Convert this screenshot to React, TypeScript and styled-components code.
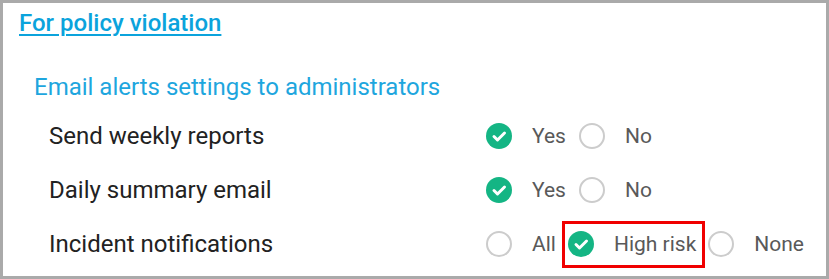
import React from 'react';
import styled, { createGlobalStyle } from 'styled-components';

const GlobalStyle = createGlobalStyle`
  html, body {
    margin: 0;
    padding: 0;
    background: #ffffff;
  }
  body {
    font-family: Roboto, 'Liberation Sans', Arial, sans-serif;
  }
`;

/**
 * Panel frame with grey border
 */
const Panel = styled.div`
  width: 829px;
  height: 279px;
  box-sizing: border-box;
  border: 3px solid #aaaaaa;
  padding: 6px 0 0 16px;
  background: #ffffff;
`;

const SectionTitle = styled.a`
  display: inline-block;
  color: #0ba3dc;
  font-size: 24px;
  font-weight: 500;
  line-height: 28px;
  text-decoration: underline;
  text-decoration-thickness: 2px;
  text-underline-offset: 3px;
  cursor: pointer;
`;

const Group = styled.div`
  margin-top: 36px;
  padding-left: 15px;
`;

const GroupTitle = styled.h2`
  margin: 0 0 8px 0;
  color: #1ea6de;
  font-size: 24px;
  font-weight: 400;
  line-height: 28px;
`;

const SettingRow = styled.div`
  display: grid;
  grid-template-columns: 437px auto;
  align-items: center;
  height: 54px;
  padding-left: 15px;
`;

const SettingLabel = styled.span`
  color: #222222;
  font-size: 24px;
  line-height: 28px;
`;

const RadioGroup = styled.div`
  display: flex;
  align-items: center;
`;

const Option = styled.label<{ $highlight?: boolean }>`
  display: flex;
  align-items: center;
  gap: 20px;
  box-sizing: border-box;
  height: ${p => (p.$highlight ? '47px' : 'auto')};
  margin-right: ${p => (p.$highlight ? '3px' : '13px')};
  margin-left: ${p => (p.$highlight ? '-7px' : '0')};
  padding: ${p => (p.$highlight ? '0 6px 0 3px' : '0')};
  border: ${p => (p.$highlight ? '3px solid #f00000' : 'none')};
  cursor: pointer;
`;

const OptionText = styled.span`
  color: #595959;
  font-size: 21px;
  line-height: 28px;
`;

const Circle = styled.span<{ $checked?: boolean }>`
  display: inline-flex;
  align-items: center;
  justify-content: center;
  width: 26px;
  height: 26px;
  box-sizing: border-box;
  border-radius: 50%;
  background: ${p => (p.$checked ? '#14b584' : '#ffffff')};
  border: ${p => (p.$checked ? 'none' : '2px solid #cccccc')};
`;

const Check = () => (
  <svg width="26" height="26" viewBox="0 0 26 26">
    <path d="M8 13.5 L11.5 17 L18.5 10" fill="none" stroke="#ffffff" strokeWidth="3" strokeLinecap="round" strokeLinejoin="round" />
  </svg>
);

interface RowProps {
  label: string;
  options: string[];
  value: string;
  highlight?: string;
}

const Row: React.FC<RowProps> = ({ label, options, value, highlight }) => (
  <SettingRow>
    <SettingLabel>{label}</SettingLabel>
    <RadioGroup>
      {options.map(o => (
        <Option key={o} $highlight={o === highlight}>
          <Circle $checked={o === value}>{o === value && <Check />}</Circle>
          <OptionText>{o}</OptionText>
        </Option>
      ))}
    </RadioGroup>
  </SettingRow>
);

export default function App() {
  return (
    <>
      <GlobalStyle />
      <Panel>
        <SectionTitle>For policy violation</SectionTitle>
        <Group>
          <GroupTitle>Email alerts settings to administrators</GroupTitle>
          <Row label="Send weekly reports" options={['Yes', 'No']} value="Yes" />
          <Row label="Daily summary email" options={['Yes', 'No']} value="Yes" />
          <Row
            label="Incident notifications"
            options={['All', 'High risk', 'None']}
            value="High risk"
            highlight="High risk"
          />
        </Group>
      </Panel>
    </>
  );
}
